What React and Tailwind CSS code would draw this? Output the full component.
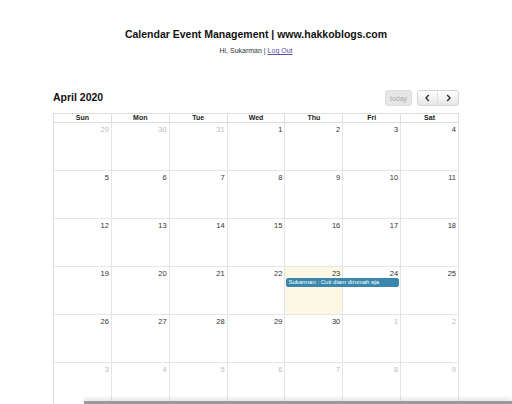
import React from "react";

const days = ["Sun", "Mon", "Tue", "Wed", "Thu", "Fri", "Sat"];

const weeks = [
  [[29, 0], [30, 0], [31, 0], [1, 1], [2, 1], [3, 1], [4, 1]],
  [[5, 1], [6, 1], [7, 1], [8, 1], [9, 1], [10, 1], [11, 1]],
  [[12, 1], [13, 1], [14, 1], [15, 1], [16, 1], [17, 1], [18, 1]],
  [[19, 1], [20, 1], [21, 1], [22, 1], [23, 1], [24, 1], [25, 1]],
  [[26, 1], [27, 1], [28, 1], [29, 1], [30, 1], [1, 0], [2, 0]],
  [[3, 0], [4, 0], [5, 0], [6, 0], [7, 0], [8, 0], [9, 0]],
];

function Chevron({ dir }) {
  return (
    <svg width="7" height="8" viewBox="0 0 7 8" fill="none" stroke="#333" strokeWidth="1.4">
      {dir === "left" ? <path d="M4.8 1 L2 4 L4.8 7" /> : <path d="M2.2 1 L5 4 L2.2 7" />}
    </svg>
  );
}

export default function App() {
  return (
    <div className="relative w-[512px] h-[404px] overflow-hidden bg-white" style={{ fontFamily: '"Liberation Sans", Arial, sans-serif' }}>
      <div className="pt-[27px] text-center">
        <h1 className="text-[10.5px] font-bold text-[#111] leading-[14px]">
          Calendar Event Management | www.hakkoblogs.com
        </h1>
        <p className="mt-[5px] text-[7px] leading-[9px] text-[#333]">
          Hi, Sukarman | <a className="text-[#5a4fa8] underline">Log Out</a>
        </p>
      </div>

      <div className="px-[53px] mt-[34px]">
        <div className="flex items-center justify-between h-[18px]">
          <h2 className="text-[10.5px] font-bold text-[#111] leading-[14px] -mt-[2px]">April 2020</h2>
          <div className="flex items-center gap-[5px]">
            <button className="w-[27px] h-[16px] rounded-[3px] bg-[#e6e6e6] border border-[#ddd] text-[7px] text-[#aaa] leading-none">
              today
            </button>
            <div className="flex h-[16px] rounded-[3px] border border-[#d5d5d5] overflow-hidden bg-gradient-to-b from-white to-[#e6e6e6]">
              <button className="w-[20px] flex items-center justify-center border-r border-[#e0e0e0]">
                <Chevron dir="left" />
              </button>
              <button className="w-[20px] flex items-center justify-center">
                <Chevron dir="right" />
              </button>
            </div>
          </div>
        </div>

        <div className="mt-[6px] w-[406px] border-l border-t border-[#ddd]">
          <div className="grid grid-cols-7 h-[9px]">
            {days.map((d) => (
              <div key={d} className="border-r border-b border-[#ddd] text-center text-[7px] font-bold text-[#222] leading-[8px]">
                {d}
              </div>
            ))}
          </div>
          {weeks.map((week, wi) => (
            <div key={wi} className="relative grid grid-cols-7 h-[48px]">
              {week.map(([n, cur], di) => {
                const today = wi === 3 && di === 4;
                return (
                  <div
                    key={di}
                    className={`border-r border-b border-[#e5e5e5] text-right pr-[2px] pt-[2px] text-[7.5px] leading-[10px] ${
                      cur ? "text-[#333]" : "text-[#bbb]"
                    } ${today ? "bg-[#fcf8e3]" : ""}`}
                  >
                    {n}
                  </div>
                );
              })}
              {wi === 3 && (
                <div className="absolute inset-x-0 top-[11px] grid grid-cols-7 pointer-events-none">
                  <div className="col-start-5 col-span-2 ml-[1px] mr-[2px] h-[9px] rounded-[2px] bg-[#3a87ad] border border-[#3a87ad] text-white text-[6px] leading-[7px] px-[1px] whitespace-nowrap overflow-hidden">
                    Sukarman : Cuti diam dirumah aja
                  </div>
                </div>
              )}
            </div>
          ))}
        </div>
      </div>

      <div className="absolute left-[84px] right-0 bottom-0 h-[3px] bg-[#9a9a9a] shadow-[0_-2px_4px_rgba(0,0,0,0.15)]" />
    </div>
  );
}
